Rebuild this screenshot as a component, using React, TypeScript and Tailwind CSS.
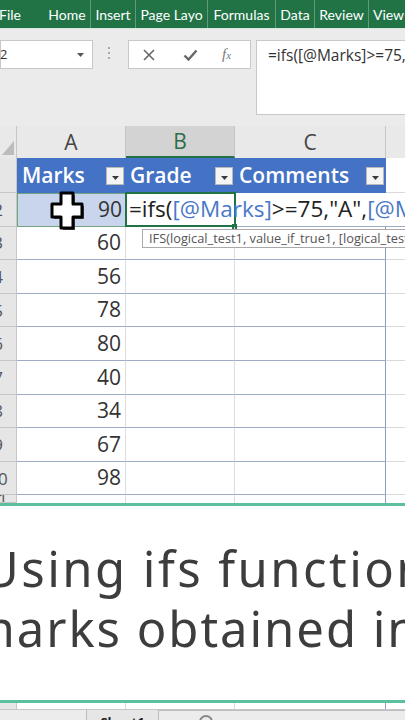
import React from 'react'

const tabs = [
  { label: 'File', w: 'w-[44px]', sep: false, align: 'justify-start' },
  { label: 'Home', w: 'w-[46px]', sep: false, align: 'justify-center' },
  { label: 'Insert', w: 'w-[45px]', sep: true, align: 'justify-center' },
  { label: 'Page Layo', w: 'w-[72px]', sep: true, align: 'justify-center' },
  { label: 'Formulas', w: 'w-[68px]', sep: true, align: 'justify-center' },
  { label: 'Data', w: 'w-[39px]', sep: true, align: 'justify-center' },
  { label: 'Review', w: 'w-[54px]', sep: true, align: 'justify-center' },
  { label: 'View', w: 'w-[40px]', sep: true, align: 'justify-center' },
]

const marks = [60, 56, 78, 80, 40, 34, 67, 98]

function FilterButton() {
  return (
    <div className="flex h-[18px] w-[18px] shrink-0 items-end justify-center border border-[#b9b9b9] bg-[#f4f4f4] pb-[4px]">
      <svg width="7" height="4" viewBox="0 0 7 4">
        <polygon points="0,0 7,0 3.5,4" fill="#3a3a3a" />
      </svg>
    </div>
  )
}

// the row header is mostly scrolled off the left edge, so only a sliver of each number shows
function RowHeader({ n }: { n: string }) {
  return (
    <div className="flex h-full w-[17px] shrink-0 overflow-hidden border-r border-b border-[#c6c6c6] bg-[#e6e6e6]">
      <div className="ml-[-17px] flex h-full w-[30px] shrink-0 items-center justify-center text-[17px] leading-none text-[#555]">
        {n}
      </div>
    </div>
  )
}

function DataRow({ n, value }: { n: number; value: number }) {
  return (
    <div className="flex h-[33.6px]">
      <RowHeader n={String(n)} />
      <div className="flex w-[109px] shrink-0 items-center justify-end border-r border-b border-r-[#dcdcdc] border-b-[#9eabc6] pr-[4px] text-[21px] text-[#333]">
        {value}
      </div>
      <div className="w-[109px] shrink-0 border-r border-b border-r-[#dcdcdc] border-b-[#9eabc6]" />
      <div className="w-[151px] shrink-0 border-r border-b border-r-[#8f9cbc] border-b-[#9eabc6]" />
      <div className="flex-1 border-b border-[#dadada]" />
    </div>
  )
}

function GridSliver() {
  return (
    <div className="flex h-[6px] shrink-0">
      <div className="w-[17px] shrink-0 border-r border-[#c6c6c6] bg-[#e6e6e6]" />
      <div className="w-[109px] shrink-0 border-r border-[#dcdcdc]" />
      <div className="w-[109px] shrink-0 border-r border-[#dcdcdc]" />
      <div className="w-[151px] shrink-0 border-r border-[#8f9cbc]" />
      <div className="flex-1" />
    </div>
  )
}

export default function App() {
  return (
    <div className="flex h-[720px] w-[405px] flex-col overflow-hidden bg-white font-['Open_Sans',sans-serif]">
      {/* ribbon */}
      <div className="flex h-[28px] shrink-0 items-stretch bg-[#217346] font-['Lato',sans-serif] text-[14px] text-white">
        {tabs.map((t) => (
          <div
            key={t.label}
            className={`flex ${t.w} ${t.align} shrink-0 items-center whitespace-nowrap ${t.sep ? 'border-l border-[#5d9c76]' : ''}`}
          >
            <span className={t.label === 'File' ? 'ml-[-1px]' : ''}>{t.label}</span>
          </div>
        ))}
      </div>

      {/* formula area */}
      <div className="flex h-[98px] shrink-0 items-start border-t border-[#d7e7dc] bg-[#ebebeb] pt-[11px]">
        <div className="flex h-[29px] w-[93px] shrink-0 items-center justify-between border border-[#c8c8c8] bg-white pr-[8px] text-[13px] text-[#333]">
          <span className="ml-[-1px]">2</span>
          <svg width="7" height="4" viewBox="0 0 7 4">
            <polygon points="0,0 7,0 3.5,4" fill="#555" />
          </svg>
        </div>
        <div className="ml-[15px] mt-[7px] flex shrink-0 flex-col gap-[3px]">
          <div className="h-[2px] w-[2px] bg-[#aaa]" />
          <div className="h-[2px] w-[2px] bg-[#aaa]" />
          <div className="h-[2px] w-[2px] bg-[#aaa]" />
        </div>
        <div className="ml-[18px] flex h-[29px] w-[123px] shrink-0 items-center border border-[#c8c8c8] bg-white">
          <svg className="ml-[14px]" width="12" height="12" viewBox="0 0 12 12">
            <path d="M1 1 L11 11 M11 1 L1 11" stroke="#666" strokeWidth="1.6" />
          </svg>
          <svg className="ml-[28px]" width="15" height="12" viewBox="0 0 15 12">
            <path d="M1.5 6.5 L5.5 10.5 L13.5 1.5" stroke="#666" strokeWidth="2.4" fill="none" />
          </svg>
          <span className="ml-[24px] font-['Liberation_Serif',serif] text-[15px] italic text-[#777]">
            f<span className="text-[11px]">x</span>
          </span>
        </div>
        <div className="ml-[5px] flex h-[75px] flex-1 items-start overflow-hidden border-y border-l border-[#c8c8c8] bg-white pl-[11px] pt-[3px] text-[15.5px] whitespace-nowrap text-[#333]">
          =ifs([@Marks]&gt;=75,"A",[@Marks]
        </div>
      </div>

      {/* column headers */}
      <div className="flex h-[32px] shrink-0 bg-[#e9e9e9] text-[21px] leading-none text-[#444]">
        <div className="flex w-[17px] shrink-0 items-end justify-end border-r border-[#c6c6c6] pr-[2px] pb-[3px]">
          <svg width="12" height="14" viewBox="0 0 12 14">
            <polygon points="12,0 12,14 0,14" fill="#bcbcbc" />
          </svg>
        </div>
        <div className="flex w-[109px] shrink-0 items-center justify-center border-r border-[#c6c6c6]">A</div>
        <div className="flex w-[109px] shrink-0 items-center justify-center border-r border-b-2 border-r-[#c6c6c6] border-b-[#217346] bg-[#d3d3d3] text-[#2c6e47]">
          B
        </div>
        <div className="flex w-[151px] shrink-0 items-center justify-center border-r border-[#c6c6c6]">C</div>
        <div className="flex-1" />
      </div>

      {/* table header */}
      <div className="flex h-[35px] shrink-0">
        <RowHeader n="1" />
        <div className="flex w-[109px] shrink-0 items-center justify-between bg-[#4472c4] pl-[5px] pr-[2px] text-[21px] font-semibold text-white">
          <span>Marks</span>
          <FilterButton />
        </div>
        <div className="flex w-[109px] shrink-0 items-center justify-between bg-[#4472c4] pl-[4px] pr-[2px] text-[21px] font-semibold text-white">
          <span>Grade</span>
          <FilterButton />
        </div>
        <div className="flex w-[151px] shrink-0 items-center justify-between bg-[#4472c4] pl-[4px] pr-[2px] text-[21px] font-semibold text-white">
          <span>Comments</span>
          <FilterButton />
        </div>
        <div className="flex-1 border-b border-[#dadada]" />
      </div>

      {/* editing row */}
      <div className="relative flex h-[33.6px] shrink-0">
        <RowHeader n="2" />
        <div className="flex w-[109px] shrink-0 items-center justify-end border border-[#6fa57f] bg-[#c8d5ec] pr-[3px] text-[21px] text-[#333]">
          90
        </div>
        <div className="relative flex min-w-0 flex-1 items-center border-b border-[#9eabc6] bg-white">
          <div className="absolute left-[-1px] top-[-1px] h-[35px] w-[111px] border-2 border-[#217346]" />
          <div className="absolute left-[106px] top-[31px] h-[5px] w-[5px] bg-[#217346]" />
          <span className="relative ml-[3px] whitespace-nowrap text-[22.5px] text-[#222]">
            =ifs(<span className="text-[#4a78c8]">[@Marks]</span>&gt;=75,"A",<span className="text-[#4a78c8]">[@Marks]</span>
          </span>
        </div>
        {/* cursor */}
        <svg className="absolute left-[49px] top-[-2px]" width="36" height="40" viewBox="0 0 36 40">
          <path d="M13 3 H25 V14 H34 V27 H25 V38 H13 V27 H4 V14 H13 Z" fill="#555" transform="translate(1 1)" />
          <path
            d="M12 2 H24 V13 H33 V26 H24 V37 H12 V26 H3 V13 H12 Z"
            fill="white"
            stroke="black"
            strokeWidth="3"
            strokeLinejoin="round"
          />
        </svg>
      </div>

      {/* rows */}
      <div className="relative shrink-0">
        {marks.map((m, i) => (
          <DataRow key={i} n={i + 3} value={m} />
        ))}
        <div className="absolute left-[142px] top-[2px] flex h-[19px] w-[280px] items-center overflow-hidden border border-[#a9a9a9] bg-white pl-[6px] text-[12.8px] whitespace-nowrap text-[#555]">
          IFS(logical_test1, value_if_true1, [logical_test2, value_if_true2], ...)
        </div>
      </div>
      <div className="flex h-[8px] shrink-0">
        <RowHeader n="11" />
        <div className="w-[109px] shrink-0 border-r border-[#dcdcdc]" />
        <div className="w-[109px] shrink-0 border-r border-[#dcdcdc]" />
        <div className="w-[151px] shrink-0 border-r border-[#8f9cbc]" />
        <div className="flex-1" />
      </div>

      {/* caption */}
      <div className="flex h-[200px] shrink-0 flex-col overflow-hidden border-y-[3px] border-[#5cbf9f] bg-white pt-[32px] font-['Noto_Sans',sans-serif] text-[49px] leading-[60px] tracking-[0.05em] whitespace-nowrap text-[#3d3d3f]">
        <div className="ml-[-17px]">Using ifs function</div>
        <div className="ml-[-31px] tracking-[0.04em]">marks obtained in</div>
      </div>

      <GridSliver />

      {/* sheet tabs */}
      <div className="flex flex-1 items-start border-t border-[#c6c6c6] bg-[#e6e6e6]">
        <div className="h-full w-[87px] shrink-0 border-r border-[#bdbdbd] bg-[#ececec]" />
        <div className="flex h-full w-[71px] shrink-0 items-start justify-center overflow-hidden pt-[6px] text-[13px] leading-none font-bold text-[#222]">
          Sheet1
        </div>
        <div className="relative h-full flex-1 border-l border-t border-[#bdbdbd] bg-[#ececec]">
          <div className="absolute left-[40px] top-[4px] h-[14px] w-[14px] rounded-full border-2 border-[#888]" />
        </div>
      </div>
    </div>
  )
}
